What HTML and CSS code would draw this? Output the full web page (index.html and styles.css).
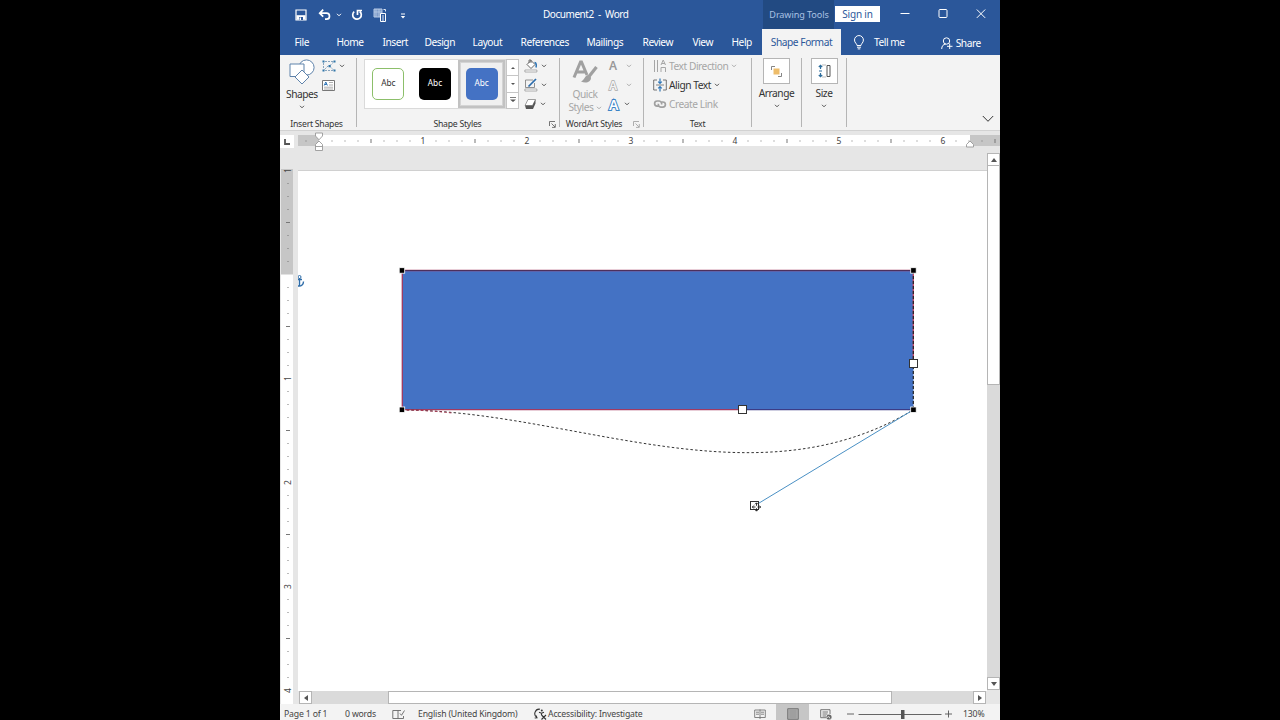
FILE: index.html
```html
<!DOCTYPE html>
<html lang="en">

<head>
    <meta charset="utf-8">
    <meta name="viewport" content="width=device-width, initial-scale=1.0">
    <title>Document2 - Word</title>
    <link rel="stylesheet" href="styles.css">
</head>

<body>

    <svg class="defs">
        <symbol id="caret" viewBox="0 0 6 4">
            <path d="M1 .8 3 2.8 5 .8" fill="none" stroke="currentColor" stroke-width="1" />
        </symbol>
        <symbol id="launcher" viewBox="0 0 7 7">
            <path d="M.5 5V.5H6M2.5 2.5 6 6M6.3 3v3.4H3" fill="none" stroke="currentColor" stroke-width=".9" />
        </symbol>
    </svg>

    <div class="window">
        <header>
            <div class="titlebar">
                <div class="quick">
                    <svg width="12" height="12" viewBox="0 0 12 12">
                        <path d="M1 1h10v10H1z" fill="none" stroke="#fff" stroke-width="1.2" />
                        <path d="M1.500 6.200h9v4.500h-9z" fill="#fff" />
                        <path d="M4 8h4v3H4z" fill="#2b579a" />
                        <path d="M4.500 8.500H6V11H4.500z" fill="#fff" />
                    </svg>
                    <svg class="undo" width="13" height="12" viewBox="0 0 13 12">
                        <path d="M2 4.200h6.500c4 0 4 6 0 6H7M5.200.700 1.700 4.200 5.200 7.700" fill="none" stroke="#fff" stroke-width="1.700" />
                    </svg>
                    <svg class="caret light" width="6" height="4"><use href="#caret" /></svg>
                    <svg class="redo" width="12" height="12" viewBox="0 0 12 12">
                        <path d="M3.200 2.600a4.300 4.300 0 1 0 5.500-.1M6.500 6V1.500H11" fill="none" stroke="#fff" stroke-width="1.700" />
                    </svg>
                    <svg class="touch" width="14" height="14" viewBox="0 0 14 14">
                        <path d="M1 1h8v8H1z" fill="#7f9cc9" stroke="#b9cbe6" />
                        <path d="M3 1v8M1 4h8M6 1v8" fill="none" stroke="#b9cbe6" stroke-width=".8" />
                        <path d="M7.500 5.500h5v8h-5z" fill="#2b579a" stroke="#fff" />
                        <path d="M9 8h2M9 10h2M9 12h2M10.500 1.500h2v2" fill="none" stroke="#dfe8f5" />
                    </svg>
                    <svg class="more" width="6" height="6" viewBox="0 0 6 6">
                        <path d="M1 1h4" stroke="#fff" />
                        <path d="M.8 3h4.400L3 5.500z" fill="#fff" />
                    </svg>
                </div>
                <div class="title">Document2&nbsp; -&nbsp; Word</div>
                <div class="context">Drawing Tools</div>
                <button class="signin">Sign in</button>
                <div class="controls">
                    <svg width="10" height="10" viewBox="0 0 10 10"><path d="M.5 4.500h9" stroke="#fff" /></svg>
                    <svg width="10" height="10" viewBox="0 0 10 10"><rect x="1" y=".5" width="8" height="8" rx="1" fill="none" stroke="#fff" /></svg>
                    <svg width="10" height="10" viewBox="0 0 10 10"><path d="M.8.500l8.400 8.400M9.200.500.8 8.900" stroke="#fff" /></svg>
                </div>
            </div>
            <div class="tabbar">
                <nav>
                    <a>File</a>
                    <a>Home</a>
                    <a>Insert</a>
                    <a>Design</a>
                    <a>Layout</a>
                    <a>References</a>
                    <a>Mailings</a>
                    <a>Review</a>
                    <a>View</a>
                    <a>Help</a>
                </nav>
                <div class="active">Shape Format</div>
                <svg class="bulb" width="12" height="15" viewBox="0 0 12 15">
                    <path d="M4 10.500C4 8.500 1.500 8 1.500 5a4.400 4.400 0 0 1 8.900 0C10.400 8 8 8.500 8 10.500zM4 12.200h4M4.700 13.900h2.600" fill="none" stroke="#fff" />
                </svg>
                <div class="tell">Tell me</div>
                <svg class="person" width="12" height="13" viewBox="0 0 12 13">
                    <circle cx="5.500" cy="4" r="3.200" fill="none" stroke="#fff" />
                    <path d="M.7 12c0-3 1.600-4.800 4-4.800M8.700 6.500v5.500M6 9.300h5.500" fill="none" stroke="#fff" />
                </svg>
                <div class="share">Share</div>
            </div>
        </header>

        <section class="ribbon">
            <div class="group insert">
                <div class="tools">
                    <div class="big">
                        <svg width="26" height="26" viewBox="0 0 26 26" fill="#fff" stroke="#5f83ab">
                            <circle cx="17.500" cy="8.500" r="7.600" />
                            <path d="M1 5h14v12.500H1z" />
                            <path d="M13 11l7 7-7 7-7-7z" />
                        </svg>
                        <span>Shapes</span>
                        <svg class="caret" width="6" height="4"><use href="#caret" /></svg>
                    </div>
                    <div class="stack">
                        <div class="row">
                            <svg width="14" height="12" viewBox="0 0 14 12">
                                <path d="M3 1.500h8M11.500 2 7.500 6l4 4M1.500 3v6M3 10.500h8M6 6 2 10" fill="none" stroke="#6b8fb0" stroke-width=".8" stroke-dasharray="2 1" />
                                <path d="M.5.500h2v2h-2zM11.500.500h2v2h-2zM.5 9.500h2v2h-2zM11.500 9.500h2v2h-2zM6.500 5h2.200v2.200H6.500z" fill="#2e75a8" />
                            </svg>
                            <svg class="caret" width="6" height="4"><use href="#caret" /></svg>
                        </div>
                        <div class="row">
                            <svg width="13" height="11" viewBox="0 0 13 11">
                                <path d="M.5.500h12v10H.5z" fill="#fff" stroke="#777" />
                                <path d="M2.200 5.500 3.800 2l1.600 3.500M2.800 4.500h2" fill="none" stroke="#2e75b6" />
                                <path d="M7 2.500h4M7 5h4M2 7.200h9M2 9h9" stroke="#999" stroke-width=".8" />
                            </svg>
                        </div>
                    </div>
                </div>
                <div class="label">Insert Shapes</div>
            </div>

            <div class="group styles">
                <div class="tools">
                    <div class="gallery">
                        <div class="item"><span class="outline">Abc</span></div>
                        <div class="item"><span class="dark">Abc</span></div>
                        <div class="item picked"><span class="blue">Abc</span></div>
                    </div>
                    <div class="scroller">
                        <i><svg width="4" height="2" viewBox="0 0 4 2"><path d="M0 2 2 0l2 2z" /></svg></i>
                        <i><svg width="4" height="2" viewBox="0 0 4 2"><path d="M0 0h4L2 2z" /></svg></i>
                        <i><svg width="6" height="6" viewBox="0 0 6 6"><path d="M0 0h6v.8H0zM0 2.500h6L3 5z" /></svg></i>
                    </div>
                    <div class="stack">
                        <div class="row">
                            <svg width="14" height="14" viewBox="0 0 14 14">
                                <path d="M3 5.500 7 1.500l4 4-4 4z" fill="#fff" stroke="#555" stroke-width=".9" />
                                <path d="M5 4V1h2v3" fill="none" stroke="#555" stroke-width=".8" />
                                <path d="M10.500 3.500c2 0 2 3 1.500 5" fill="none" stroke="#2e75b6" stroke-width="1.500" />
                                <path d="M.9 11h12v2H.9z" fill="#fff" stroke="#999" stroke-width=".8" />
                            </svg>
                            <svg class="caret" width="6" height="4"><use href="#caret" /></svg>
                        </div>
                        <div class="row">
                            <svg width="14" height="14" viewBox="0 0 14 14">
                                <path d="M9 2H1.500v7.500h9V5" fill="none" stroke="#777" stroke-width=".8" />
                                <path d="M4.500 8.500 12 1" stroke="#2b6cab" stroke-width="1.700" />
                                <path d="M.9 11h12v2H.9z" fill="#fff" stroke="#999" stroke-width=".8" />
                            </svg>
                            <svg class="caret" width="6" height="4"><use href="#caret" /></svg>
                        </div>
                        <div class="row">
                            <svg width="12" height="14" viewBox="0 0 12 14">
                                <path d="M4 2.500h7.500L8.500 8.500H1z" fill="#fff" stroke="#888" stroke-width=".8" />
                                <path d="M1 8.500h7.500l3-6v4L9 12H2z" fill="#555" />
                            </svg>
                            <svg class="caret wide" width="6" height="4"><use href="#caret" /></svg>
                        </div>
                    </div>
                </div>
                <div class="label">Shape Styles</div>
                <svg class="launcher" width="7" height="7"><use href="#launcher" /></svg>
            </div>

            <div class="group wordart">
                <div class="tools">
                    <div class="big off">
                        <svg width="26" height="26" viewBox="0 0 26 26">
                            <path d="M2 18.500 8.500 3h1L15 16M5 13h8" fill="none" stroke="#a0a0a0" stroke-width="3" />
                            <path d="M24.500 8 17 17.500" stroke="#a0a0a0" stroke-width="3.200" />
                            <path d="M16.500 16c-4 0-3.500 5-7.500 6.500 5 2.500 10 .5 10-4z" fill="#a0a0a0" />
                        </svg>
                        <span>Quick</span>
                        <span class="second">Styles <svg class="caret" width="6" height="4"><use href="#caret" /></svg></span>
                    </div>
                    <div class="stack">
                        <div class="row off"><b>A</b><svg class="caret" width="6" height="4"><use href="#caret" /></svg></div>
                        <div class="row off"><b class="hollow">A</b><svg class="caret" width="6" height="4"><use href="#caret" /></svg></div>
                        <div class="row"><b class="glow">A</b><svg class="caret" width="6" height="4"><use href="#caret" /></svg></div>
                    </div>
                </div>
                <div class="label">WordArt Styles</div>
                <svg class="launcher off" width="7" height="7"><use href="#launcher" /></svg>
            </div>

            <div class="group text">
                <div class="tools">
                    <div class="stack">
                        <div class="row off">
                            <svg width="14" height="14" viewBox="0 0 14 14">
                                <path d="M1.500 1v12M4.500 1v12M8 6l2.200-5 2.300 5M9 4.500h3M8 13V8.500h4.500V13" fill="none" stroke="#a6a6a6" />
                            </svg>
                            <span>Text Direction</span>
                            <svg class="caret" width="6" height="4"><use href="#caret" /></svg>
                        </div>
                        <div class="row">
                            <svg width="14" height="14" viewBox="0 0 14 14">
                                <path d="M4 2H.7v10H4M10 2h3.300v10H10" fill="none" stroke="#666" stroke-width=".9" />
                                <path d="M3 7h8" stroke="#777" stroke-width=".9" />
                                <path d="M7 .5v5M5.200 3.700 7 5.500l1.800-1.800M7 13.500v-5M5.200 10.300 7 8.500l1.800 1.800" fill="none" stroke="#2e75b6" stroke-width="1.200" />
                            </svg>
                            <span>Align Text</span>
                            <svg class="caret" width="6" height="4"><use href="#caret" /></svg>
                        </div>
                        <div class="row off">
                            <svg width="14" height="14" viewBox="0 0 14 14">
                                <path d="M6.500 9.200H4.200a2.600 2.600 0 0 1 0-5.200h2a2.600 2.600 0 0 1 2.300 3.500M7.500 5h2.300a2.600 2.600 0 0 1 0 5.200h-2a2.600 2.600 0 0 1-2.300-3.500" fill="none" stroke="#a0a0a0" stroke-width="1.700" />
                            </svg>
                            <span>Create Link</span>
                        </div>
                    </div>
                </div>
                <div class="label">Text</div>
            </div>

            <div class="group folded">
                <div class="box">
                    <svg width="13" height="13" viewBox="0 0 13 13">
                        <path d="M1.500 5V1.500H5M8 11.500h3.500V8" fill="none" stroke="#777" stroke-width=".9" />
                        <path d="M3.500 3.500h6v6h-6z" fill="#eebd6a" />
                    </svg>
                </div>
                <span>Arrange</span>
                <svg class="caret" width="6" height="4"><use href="#caret" /></svg>
            </div>
            <div class="group folded">
                <div class="box">
                    <svg width="13" height="14" viewBox="0 0 13 14">
                        <path d="M9 1.500h3v11H9z" fill="#fff" stroke="#555" />
                        <path d="M4.500 1h3M4.500 13h3" stroke="#777" stroke-dasharray="1 1" />
                        <path d="M2.500 1v4M.8 3 2.500 1.300 4.200 3M2.500 13V9M.8 11l1.700 1.700L4.200 11M1 7h3" fill="none" stroke="#2e6d9c" stroke-width="1.200" />
                    </svg>
                </div>
                <span>Size</span>
                <svg class="caret" width="6" height="4"><use href="#caret" /></svg>
            </div>
            <svg class="collapse" width="12" height="8" viewBox="0 0 12 8"><path d="M.8 1 6 6.300 11.200 1" fill="none" stroke="#333" /></svg>
        </section>

        <div class="hruler">
            <div class="tabstop"><svg width="6" height="6" viewBox="0 0 6 6"><path d="M1 0v5h5" fill="none" stroke="#555" stroke-width="1.800" /></svg></div>
            <svg id="across" width="698" height="18">
                <rect width="698" height="11" fill="#fff" />
                <rect width="21" height="11" fill="#c6c6c6" />
                <rect x="672" width="30" height="11" fill="#c6c6c6" />
                <g class="ticks"></g>
                <g fill="#fff" stroke="#999" stroke-width=".9">
                    <path d="M17.500-2h7v3L21 4.800 17.500 1z" />
                    <path d="M21 6l3.500 3.500v6h-7v-6zM17.500 11.500h7" />
                    <path d="M672 6l3.500 3.500V12h-7V9.500z" />
                </g>
            </svg>
        </div>

        <main>
            <svg id="down" width="12" height="535">
                <rect width="12" height="535" fill="#fff" />
                <rect width="12" height="105.500" fill="#c6c6c6" />
                <g class="ticks"></g>
            </svg>
            <div class="page">
                <svg width="689" height="520" viewBox="298 171 689 520">
                    <path d="M299.500 278v8M294.500 282c0 5 9 6 9-.5M297.500 279.500h4.500" fill="none" stroke="#2e6ca8" stroke-width="1.400" />
                    <circle cx="299.500" cy="277" r="1.500" fill="none" stroke="#2e6ca8" />
                    <rect x="402" y="270.500" width="511.500" height="139.500" fill="#4472c4" />
                    <path d="M743 409.700H402.300V270.500H913" fill="none" stroke="#a33a60" stroke-width="1.300" />
                    <path d="M402 270.500h511" stroke="#4d2f5c" stroke-width="1" />
                    <path d="M743 409.700h170" stroke="#3c3c86" stroke-width="1.200" />
                    <path d="M913.300 271v93" stroke="#d0405c" stroke-width="1.200" />
                    <path d="M913.300 271v139" stroke="#222" stroke-width="1.200" stroke-dasharray="3 2" />
                    <path d="M402 410C572 410 754 506 913 410" fill="none" stroke="#333" stroke-dasharray="2.500 2.200" />
                    <path d="M402 410q25 .1 50 3" fill="none" stroke="#b03a55" stroke-dasharray="2.500 2.200" />
                    <path d="M913 410 755 505.500" stroke="#4a90c4" />
                    <g stroke="#fff" stroke-width=".8">
                        <rect x="399.200" y="267.700" width="5.500" height="5.500" />
                        <rect x="910.700" y="267.700" width="5.500" height="5.500" />
                        <rect x="399.200" y="407" width="5.500" height="5.500" />
                        <rect x="910.700" y="407" width="5.500" height="5.500" />
                    </g>
                    <g fill="#fff" stroke="#333">
                        <rect x="909.500" y="359.500" width="8" height="8" />
                        <rect x="738.500" y="405.500" width="8" height="8" />
                        <rect x="750.500" y="501.500" width="8" height="8" />
                    </g>
                    <path d="M756.500 503v8M752.500 507h8M755 504.300l1.500-1.500 1.500 1.500M755 509.700l1.500 1.500 1.500-1.500M753.800 505.500l-1.500 1.500 1.500 1.500M759.200 505.500l1.500 1.500-1.500 1.500" fill="none" stroke="#222" stroke-width=".9" />
                    <circle cx="756.500" cy="507" r="1.200" fill="#fff" />
                </svg>
            </div>
            <div class="vscroll">
                <i><svg width="6" height="4" viewBox="0 0 6 4"><path d="M0 4 3 0l3 4z" /></svg></i>
                <div class="thumb"></div>
                <i class="last"><svg width="6" height="4" viewBox="0 0 6 4"><path d="M0 0h6L3 4z" /></svg></i>
            </div>
            <div class="hscroll">
                <i><svg width="4" height="6" viewBox="0 0 4 6"><path d="M4 0v6L0 3z" /></svg></i>
                <div class="thumb"></div>
                <i class="last"><svg width="4" height="6" viewBox="0 0 4 6"><path d="M0 0v6l4-3z" /></svg></i>
            </div>
        </main>

        <footer>
            <span class="pages">Page 1 of 1</span>
            <span class="words">0 words</span>
            <svg class="proof" width="13" height="11" viewBox="0 0 13 11">
                <path d="M6 1.500v8H.8v-8H6zM6 1.500h3M6 9.500h5.500V7M8 4.500l1.500 1.800L12.500 1.500" fill="none" stroke="#666" stroke-width=".9" />
            </svg>
            <span class="lang">English (United Kingdom)</span>
            <svg class="access" width="13" height="12" viewBox="0 0 13 12">
                <path d="M6 1.200a4.500 4.500 0 0 0-3 8.300M2 7.500l1 2.200-2.300.3M7.500 7l4.500 4.500M12 7l-4.500 4.500M5 4.200l2.500 1 2.500-1M7.500 5v2" fill="none" stroke="#333" stroke-width="1.100" />
                <circle cx="7.800" cy="2.500" r="1" fill="#333" />
            </svg>
            <span class="check">Accessibility: Investigate</span>
            <div class="views">
                <i><svg width="12" height="10" viewBox="0 0 12 10"><path d="M.7 1h10.600v7.500H.7zM6 .5V10M2 3.200h3M2 5.200h3M7 3.200h3M7 5.200h3" fill="none" stroke="#777" stroke-width=".9" /></svg></i>
                <i class="on"><svg width="12" height="12" viewBox="0 0 12 12"><path d="M.7.700h10.600v10.600H.7z" fill="#aaa" stroke="#777" /><path d="M2.500 3h7M2.500 5h7M2.500 7h7M2.500 9h7" stroke="#909090" stroke-width=".8" /></svg></i>
                <i><svg width="12" height="11" viewBox="0 0 12 11"><path d="M10 5V.7H.7v8H6M2.500 3h5.500M2.500 5h5M2.500 7H6" fill="none" stroke="#666" stroke-width=".9" /><circle cx="9" cy="8" r="2.600" fill="#666" /><path d="M7 8.500l2-1 1 2" fill="none" stroke="#eee" stroke-width=".8" /></svg></i>
            </div>
            <svg class="zoom" width="106" height="12" viewBox="0 0 106 12">
                <path d="M1 6h7M12.500 6.500h83M99 6h7M102.500 2.500v7" stroke="#555" stroke-width=".9" />
                <path d="M55 2h3.500v9H55z" fill="#555" />
            </svg>
            <span class="percent">130%</span>
        </footer>
    </div>

    <script>
        const inch = 104;

        // dots every eighth, a short bar on the half, the number on the inch
        function drawTicks(id, zero, from, to, vertical) {
            const dest = document.querySelector(id + " .ticks");
            let out = "";

            for (let i = from; i <= to; i++) {
                if (i == 0) continue;
                const pos = zero + i * inch / 8;
                const x = vertical ? 7 : pos;
                const y = vertical ? pos : 6;
                const turn = vertical ? `rotate(-90 ${x} ${y})` : "";

                if (i % 8 == 0) {
                    out += `<text x="${x}" y="${y + 2.5}" transform="${turn}">${Math.abs(i / 8)}</text>`;
                } else if (i % 4 == 0) {
                    out += `<rect x="${x - 0.5}" y="${y - 2}" width="1" height="4" transform="${turn}"/>`;
                } else {
                    out += `<rect x="${x - 0.5}" y="${y - 0.5}" width="1" height="1"/>`;
                }
            }
            dest.innerHTML = out;
        }

        drawTicks("#across", 21, -1, 52, false);
        drawTicks("#down", 105.5, -8, 32, true);
    </script>
</body>

</html>
```
FILE: styles.css
```css
body {
    margin: 0;
    background-color: #000;
    font-family: "Noto Sans", "Open Sans", sans-serif;
    font-size: 10.2px;
    letter-spacing: -0.045em;
    color: #333;
    overflow: hidden;
}

svg {
    display: block;
    flex-shrink: 0;
}

i {
    font-style: normal;
}

.defs {
    position: absolute;
    width: 0;
    height: 0;
}

.window {
    width: 720px;
    height: 720px;
    margin: 0 auto;
    background-color: #e6e6e6;
    display: grid;
    grid-template-rows: 55px 76px 19px 554px 16px;
    overflow: hidden;
    white-space: nowrap;
}

/* title bar and tabs */
header {
    background-color: #2b579a;
    color: #fff;
}

.titlebar {
    display: grid;
    grid-template-columns: 262px 221px 71px 46px 1fr;
    height: 28px;
    line-height: 29px;
}

.quick {
    display: flex;
    align-items: center;
    padding-left: 15px;
}

.undo { margin-left: 11px; }
.quick .light { margin-left: 5px; }
.redo { margin-left: 9px; }
.touch { margin-left: 10px; }
.more { margin: 3px 0 0 13px; }

.title {
    padding-left: 1px;
    font-size: 10px;
}

.context {
    padding-left: 1px;
    background-color: #224a82;
    color: #a9c1e3;
    font-size: 9.1px;
    text-align: center;
    letter-spacing: -0.01em;
}

.signin {
    align-self: start;
    margin: 6px 0 0 1px;
    padding: 0;
    width: 45px;
    height: 16px;
    border: none;
    background-color: #fff;
    color: #2b579a;
    font: inherit;
    font-size: 10px;
    line-height: 15px;
    letter-spacing: -0.02em;
}

.controls {
    display: flex;
    align-items: center;
    gap: 28px;
    padding: 0 0 1px 20px;
}

.tabbar {
    display: flex;
    height: 27px;
    line-height: 28px;
}

nav {
    display: grid;
    grid-template-columns: 24px 28px 24px 30px 30px 48px 38px 32px 21px 22px;
    gap: 18px;
    width: 467.5px;
    padding-left: 14.5px;
}

.active {
    width: 79px;
    height: 26px;
    margin-top: 1px;
    line-height: 26px;
    background-color: #f3f3f3;
    color: #2b579a;
    text-align: center;
}

.bulb { margin: 7px 0 0 12px; }
.tell { margin-left: 9px; }
.person { margin: 9px 0 0 36px; }
.share { margin: 1px 0 0 3px; }

/* ribbon */
.ribbon {
    display: grid;
    grid-template-columns: 77px 203px 84px 108px 50px 45px 1fr;
    background-color: #f3f3f3;
    border-bottom: 1px solid #d2d2d2;
    padding-top: 3px;
    box-sizing: border-box;
}

.group {
    position: relative;
    height: 69px;
    border-right: 1px solid #b5b5b5;
    box-sizing: border-box;
}

.tools {
    display: flex;
    height: 61px;
}

.label {
    font-size: 8.7px;
    line-height: 11px;
    text-align: center;
    letter-spacing: -0.03em;
}

.launcher {
    position: absolute;
    right: 3px;
    bottom: -1px;
    color: #666;
}

.off {
    color: #a6a6a6;
}

.caret {
    color: #555;
}

.off .caret {
    color: #aaa;
}

.caret.light {
    color: #fff;
}

.big {
    display: flex;
    flex-direction: column;
    align-items: center;
    line-height: 13px;
}

.big > span {
    margin-top: 3px;
}

.big > .caret {
    margin-top: 4px;
}

.big .second {
    margin-top: 0;
}

.second .caret {
    display: inline-block;
    vertical-align: 1px;
}

.stack {
    display: flex;
    flex-direction: column;
}

.row {
    display: flex;
    align-items: center;
    height: 19.4px;
}

.insert .big { margin: 1px 0 0 6px; }
.insert .stack { margin: -2px 0 0 4px; }
.insert .row .caret { margin-left: 3px; }
.insert .label { padding-right: 3px; }

.gallery {
    display: flex;
    margin: 1px 0 0 7px;
    width: 142px;
    height: 50px;
    box-sizing: border-box;
    background-color: #fff;
    border: 1px solid #dadada;
}

.item {
    display: flex;
    align-items: center;
    justify-content: center;
    width: 47px;
    height: 48px;
    box-sizing: border-box;
}

.item span {
    width: 32px;
    height: 32px;
    box-sizing: border-box;
    border-radius: 5px;
    line-height: 30px;
    font-size: 8.3px;
    text-align: center;
    letter-spacing: 0;
    color: #fff;
}

.item .outline {
    border: 1px solid #8cbf6a;
    line-height: 28px;
    color: #333;
}

.dark { background-color: #000; }
.blue { background-color: #4472c4; }

.picked {
    border: 2px solid #c2c2c2;
    background-color: #f0f0f0;
    box-shadow: inset 0 0 0 1px #d4d4d4;
}

.scroller {
    display: grid;
    grid-template-rows: repeat(3, 1fr);
    width: 13px;
    height: 49px;
    margin-top: 1px;
}

.scroller i {
    display: flex;
    align-items: center;
    justify-content: center;
    background-color: #fff;
    border: 1px solid #c6c6c6;
    margin-bottom: -1px;
    fill: #555;
}

.styles .stack { margin: -2px 0 0 5px; }
.styles .row .caret { margin-left: 3px; }
.styles .row .wide { margin-left: 4px; }
.styles .label { padding-right: 14px; }

.styles .label { padding-right: 1px; }

.wordart .big { margin: 1px 0 0 8px; width: 34px; }
.wordart .stack { margin: -2px 0 0 7px; }
.wordart .row .caret { margin-left: 7px; }
.wordart .row .glow + .caret { margin-left: 5px; }
.wordart .label { padding-right: 15px; }

b {
    width: 10px;
    font-size: 12px;
    font-weight: 600;
    line-height: 19px;
    color: #999;
}

.hollow {
    color: #f3f3f3;
    -webkit-text-stroke: 1.4px #aaa;
    paint-order: stroke fill;
}

.glow {
    color: #fff;
    font-size: 14px;
    -webkit-text-stroke: 2px #3c83c6;
    paint-order: stroke fill;
}

.text .stack { margin: -2px 0 0 9px; }
.text .row span { margin-left: 2px; }
.text .row .caret { margin-left: 3px; }

.folded {
    display: flex;
    flex-direction: column;
    align-items: center;
}

.folded .box {
    display: flex;
    align-items: center;
    justify-content: center;
    width: 27px;
    height: 26px;
    box-sizing: border-box;
    border: 1px solid #b5b5b5;
    background-color: #fff;
}

.folded span {
    margin-top: 3px;
    line-height: 13px;
}

.folded .caret {
    margin-top: 4px;
}

.collapse {
    margin: 57px 6px 0 auto;
}

/* rulers */
.hruler {
    display: flex;
    padding-top: 4px;
}

.tabstop {
    display: flex;
    align-items: center;
    justify-content: center;
    width: 14px;
    height: 13px;
    margin-right: 4px;
    background-color: #fff;
}

#across {
    overflow: visible;
}

.ticks {
    fill: #777;
}

.ticks text {
    font-size: 8.5px;
    letter-spacing: 0;
    text-anchor: middle;
    fill: #444;
}

/* document area */
main {
    display: grid;
    grid-template-columns: 18px 689px 13px;
    grid-template-rows: 540px 14px;
}

#down {
    grid-row: 1 / 3;
    margin: 19px 0 0 1px;
}

.page {
    margin-top: 20px;
    height: 521px;
    background-color: #fff;
    border-top: 1px solid #d0d0d0;
    box-sizing: border-box;
    overflow: hidden;
}

.vscroll,
.hscroll {
    display: flex;
    background-color: #dadada;
}

.vscroll {
    flex-direction: column;
    margin-top: 3px;
}

.hscroll {
    grid-column: 2;
    margin: 1px 1px 0 1px;
}

.vscroll i,
.hscroll i {
    display: flex;
    align-items: center;
    justify-content: center;
    width: 13px;
    height: 13px;
    box-sizing: border-box;
    border: 1px solid #b5b5b5;
    background-color: #fff;
    fill: #555;
}

.thumb {
    background-color: #fff;
    border: 1px solid #b5b5b5;
    box-sizing: border-box;
}

.vscroll .thumb {
    height: 220px;
    margin-top: -1px;
}

.hscroll .thumb {
    width: 504px;
    margin-left: 76px;
}

.vscroll .last { margin-top: auto; }
.hscroll .last { margin-left: auto; }

/* status bar */
footer {
    display: flex;
    align-items: center;
    background-color: #f3f3f3;
    font-size: 8.7px;
    letter-spacing: -0.02em;
    padding-top: 2px;
    height: 16px;
    line-height: 16px;
    color: #444;
}

.pages { width: 61px; margin-left: 4px; }
.words { width: 47px; }
.lang { width: 102px; margin-left: 13px; }
.access { margin-left: 14px; }
.check { margin-left: 1px; width: 93px; }

.views {
    display: flex;
    margin: -2px 0 0 102px;
}

.views i {
    display: flex;
    align-items: center;
    justify-content: center;
    width: 33px;
    height: 16px;
    padding-top: 2px;
}

.views .on {
    background-color: #c6c6c6;
}

.zoom { margin-left: 4px; }
.percent { margin-left: 11px; }
```
